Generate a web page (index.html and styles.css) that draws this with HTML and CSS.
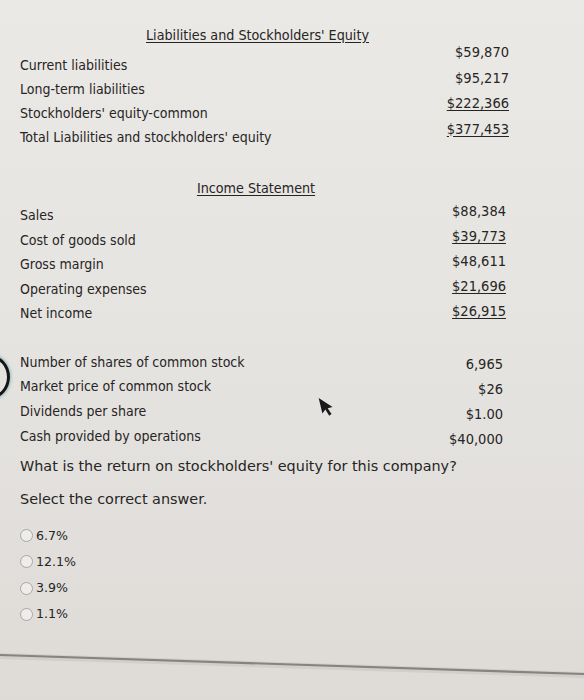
FILE: index.html
```html
<!DOCTYPE html>
<html lang="en">
<head>
<meta charset="utf-8">
<title>Return on stockholders' equity</title>
<link rel="stylesheet" href="styles.css">
</head>
<body>
<div class="page">
  <section class="sheet sheet-balance">
    <h2 class="sheet-title">Liabilities and Stockholders' Equity</h2>
    <div class="rows">
      <ul class="labels">
        <li>Current liabilities</li>
        <li>Long-term liabilities</li>
        <li>Stockholders' equity-common</li>
        <li>Total Liabilities and stockholders' equity</li>
      </ul>
      <ul class="values">
        <li>$59,870</li>
        <li>$95,217</li>
        <li><u>$222,366</u></li>
        <li><u>$377,453</u></li>
      </ul>
    </div>
  </section>

  <section class="sheet sheet-income">
    <h2 class="sheet-title">Income Statement</h2>
    <div class="rows">
      <ul class="labels">
        <li>Sales</li>
        <li>Cost of goods sold</li>
        <li>Gross margin</li>
        <li>Operating expenses</li>
        <li>Net income</li>
      </ul>
      <ul class="values">
        <li>$88,384</li>
        <li><u>$39,773</u></li>
        <li>$48,611</li>
        <li><u>$21,696</u></li>
        <li><u>$26,915</u></li>
      </ul>
    </div>
  </section>

  <section class="sheet sheet-other">
    <div class="rows">
      <ul class="labels">
        <li>Number of shares of common stock</li>
        <li>Market price of common stock</li>
        <li>Dividends per share</li>
        <li>Cash provided by operations</li>
      </ul>
      <ul class="values">
        <li>6,965</li>
        <li>$26</li>
        <li>$1.00</li>
        <li>$40,000</li>
      </ul>
    </div>
  </section>

  <p class="question">What is the return on stockholders' equity for this company?</p>
  <p class="instruction">Select the correct answer.</p>

  <ul class="options">
    <li class="option"><span class="radio"></span>6.7%</li>
    <li class="option"><span class="radio"></span>12.1%</li>
    <li class="option"><span class="radio"></span>3.9%</li>
    <li class="option"><span class="radio"></span>1.1%</li>
  </ul>

  <span class="ring"></span>

  <svg class="cursor" width="16" height="22" viewBox="0 0 16 22">
    <path d="M2 1 L3.5 17 L7 13.5 L10 20 L12.5 18.8 L9.5 12.5 L14.5 12 Z" fill="#1a1a1a"/>
  </svg>

  <svg class="edge" width="584" height="30" viewBox="0 0 584 30">
    <path d="M0 5 L584 24" stroke="#d2cfcb" stroke-width="6"/>
    <path d="M0 4 L584 23" stroke="#868480" stroke-width="2.2"/>
  </svg>
</div>
</body>
</html>
```

FILE: styles.css
```css
* {
  box-sizing: border-box;
}

html, body {
  margin: 0;
  padding: 0;
}

body {
  width: 584px;
  height: 700px;
  overflow: hidden;
  background: linear-gradient(180deg, #ebe9e6 0%, #e6e4e1 45%, #dedbd7 100%);
  color: #262524;
  font-family: "DejaVu Sans Condensed", "Liberation Sans", sans-serif;
  font-size: 14px;
}

.page {
  position: relative;
  height: 700px;
  padding: 25px 0 0 20px;
}

ul {
  list-style: none;
  margin: 0;
  padding: 0;
}

u {
  text-decoration: underline;
  text-underline-offset: 2px;
}

.sheet {
  width: 489px;
}

.sheet-title {
  margin: 0;
  padding-right: 14px;
  font-size: 14.2px;
  font-weight: normal;
  line-height: 20px;
  text-align: center;
  text-decoration: underline;
  text-underline-offset: 2px;
}

.rows {
  display: flex;
  justify-content: space-between;
  align-items: flex-start;
}

.labels li {
  line-height: 24px;
  white-space: nowrap;
}

.values {
  text-align: right;
  font-size: 14.5px;
}

.values li {
  line-height: 25.5px;
}

/* balance sheet */
.sheet-balance .rows {
  margin-top: 8px;
}

.sheet-balance .values {
  margin-top: -13px;
}

/* income statement */
.sheet-income {
  margin-top: 29px;
  width: 486px;
}

.sheet-income .rows {
  margin-top: 5px;
}

.sheet-income .labels li {
  line-height: 24.5px;
}

.sheet-income .values {
  margin-top: -4px;
}

.sheet-income .values li {
  line-height: 25px;
}

/* other data */
.sheet-other {
  margin-top: 24px;
  width: 483px;
}

.sheet-other .labels li {
  line-height: 24.7px;
}

.sheet-other .values {
  margin-top: 2px;
}

.sheet-other .values li {
  line-height: 25px;
}

.question {
  margin: 4px 0 0;
  font-family: "DejaVu Sans", Verdana, sans-serif;
  font-size: 14.4px;
  line-height: 20px;
}

.instruction {
  margin: 13px 0 0;
  font-family: "DejaVu Sans", Verdana, sans-serif;
  font-size: 14.4px;
  line-height: 20px;
}

.options {
  margin-top: 14px;
  font-family: "DejaVu Sans", Verdana, sans-serif;
  font-size: 12.6px;
}

.option {
  display: flex;
  align-items: center;
  line-height: 26.3px;
  height: 26.3px;
}

.radio {
  width: 13px;
  height: 13px;
  margin-right: 3px;
  border: 1px solid #a9a7a4;
  border-radius: 50%;
  background: #eeedeb;
}

.ring {
  position: absolute;
  left: -30px;
  top: 355px;
  width: 40px;
  height: 44px;
  border: 3px solid #151515;
  border-radius: 50%;
  box-shadow: 0 0 3px 1px rgba(60, 150, 160, 0.5);
}

.cursor {
  position: absolute;
  left: 318px;
  top: 396px;
  transform: rotate(-8deg);
}

.edge {
  position: absolute;
  left: 0;
  top: 651px;
}
```
